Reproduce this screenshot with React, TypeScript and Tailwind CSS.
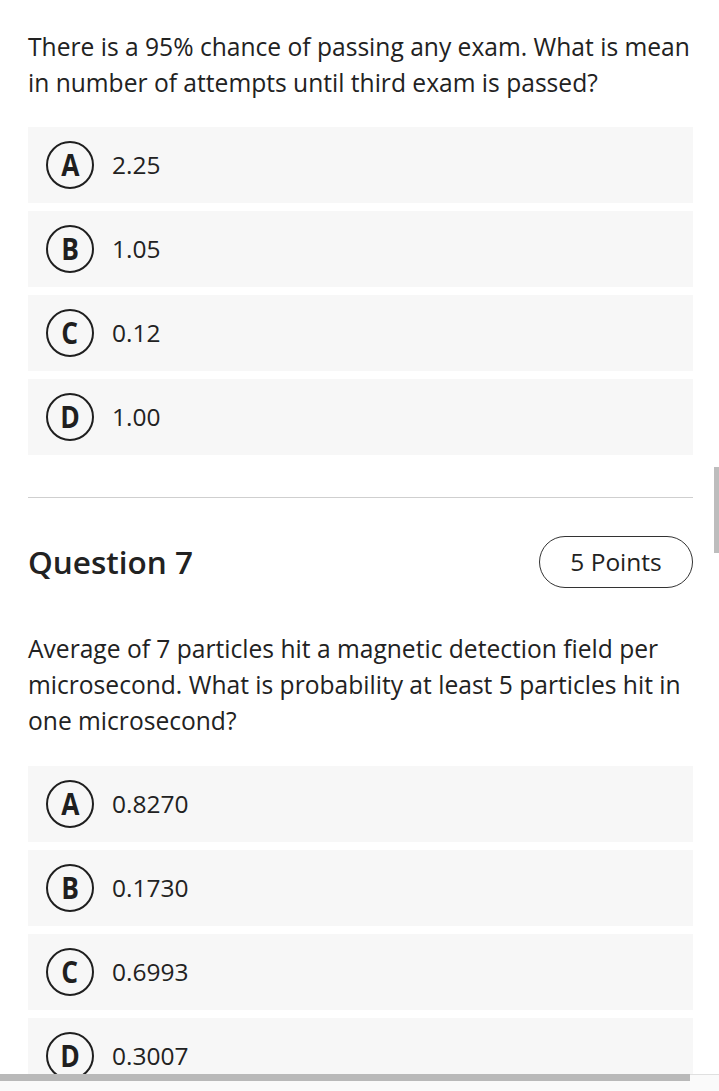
import React from "react";

const font = { fontFamily: '"Open Sans", "Noto Sans", sans-serif' };

function Option({ letter, value }: { letter: string; value: string }) {
  return (
    <div className="flex h-[76px] items-center bg-[#f7f7f7] pl-[18px]">
      <div className="flex h-[48px] w-[48px] items-center justify-center rounded-full border-2 border-[#1f1f1f] text-[30px] font-bold leading-none text-[#1f1f1f]">
        <span className="scale-x-[0.88]">{letter}</span>
      </div>
      <div className="ml-[18px] text-[24.5px] text-[#222]">{value}</div>
    </div>
  );
}

export default function App() {
  return (
    <div className="relative h-[1091px] w-[719px] overflow-hidden bg-white" style={font}>
      <div className="pl-[28px] pr-[26px] pt-[29px]">
        <p className="text-[24.6px] leading-[36px] text-[#222]">
          There is a 95% chance of passing any exam. What is mean in number of attempts until third exam is passed?
        </p>
        <div className="mt-[26px] flex flex-col gap-[8px]">
          <Option letter="A" value="2.25" />
          <Option letter="B" value="1.05" />
          <Option letter="C" value="0.12" />
          <Option letter="D" value="1.00" />
        </div>
        <div className="mt-[42px] h-px bg-[#cfcfcf]" />
        <div className="mt-[38px] flex items-center justify-between">
          <h2 className="text-[31.5px] font-semibold text-[#222]">Question 7</h2>
          <div className="flex h-[52px] w-[154px] items-center justify-center rounded-full border border-[#333] text-[24.5px] text-[#222]">
            5 Points
          </div>
        </div>
        <p className="mt-[43px] text-[24.6px] leading-[36px] text-[#222]">
          Average of 7 particles hit a magnetic detection field per microsecond. What is probability at least 5 particles hit in one microsecond?
        </p>
        <div className="mt-[27px] flex flex-col gap-[8px]">
          <Option letter="A" value="0.8270" />
          <Option letter="B" value="0.1730" />
          <Option letter="C" value="0.6993" />
          <Option letter="D" value="0.3007" />
        </div>
      </div>
      <div className="absolute left-[714px] top-[467px] h-[86px] w-[5px] bg-[#bdbdbd]" />
      <div className="absolute bottom-0 left-0 h-[17px] w-full border-t border-[#e0e0e0] bg-[#fafafa]" />
      <div className="absolute bottom-[10px] left-0 h-[7px] w-[690px] bg-[#b9b9b9]" />
    </div>
  );
}
